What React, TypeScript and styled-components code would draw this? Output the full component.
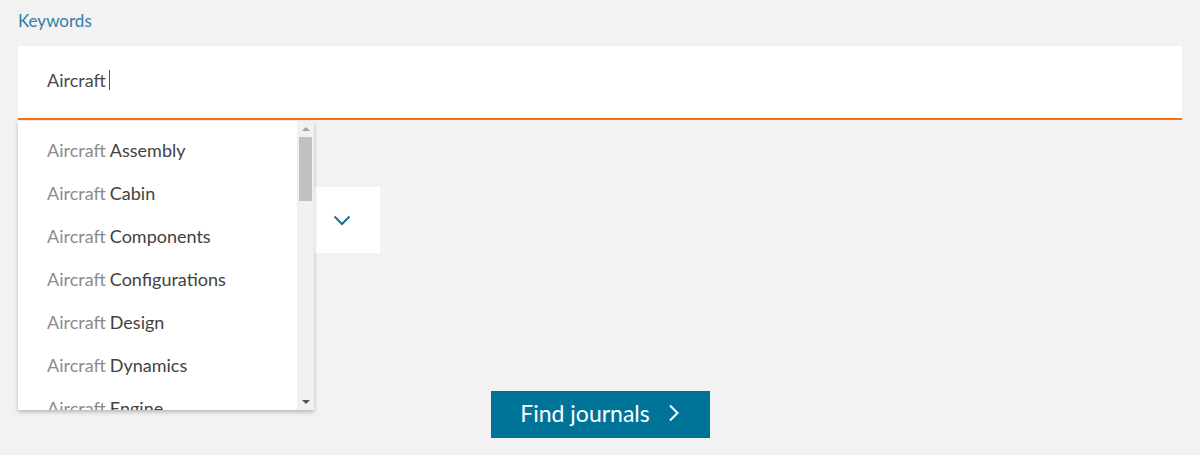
import React from "react";
import styled, { createGlobalStyle } from "styled-components";

const Global = createGlobalStyle`
  html, body { margin: 0; padding: 0; background: #f2f2f2; }
  body { font-family: Lato, "Open Sans", sans-serif; }
`;

const Page = styled.div`
  width: 1200px;
  height: 455px;
  box-sizing: border-box;
  padding: 10px 18px 0 18px;
  display: flex;
  flex-direction: column;
  overflow: hidden;
`;

const Label = styled.label`
  font-size: 17px;
  line-height: 22px;
  color: #2f7ea6;
  height: 22px;
`;

const Field = styled.div`
  position: relative;
  margin-top: 14px;
`;

const Input = styled.div`
  height: 74px;
  box-sizing: border-box;
  background: #fff;
  border-bottom: 2px solid #ff6f0f;
  display: flex;
  align-items: center;
  padding: 0 0 4px 29px;
  font-size: 18px;
  color: #4a4a4a;
`;

const Caret = styled.span`
  display: inline-block;
  width: 1px;
  height: 20px;
  background: #555;
  margin-left: 3px;
`;

const Dropdown = styled.div`
  position: absolute;
  left: 0;
  top: 75px;
  width: 296px;
  height: 289px;
  background: #fff;
  box-shadow: 0 2px 4px rgba(0, 0, 0, 0.25);
  display: flex;
  z-index: 2;
`;

const List = styled.ul`
  flex: 1;
  margin: 0;
  padding: 7px 0 0 0;
  list-style: none;
  overflow: hidden;
`;

const Item = styled.li`
  height: 43px;
  display: flex;
  align-items: center;
  padding-left: 29px;
  font-size: 18px;
  color: #424242;
  white-space: nowrap;
`;

const Prefix = styled.span`
  color: #8c8c8c;
  margin-right: 4px;
`;

const Scrollbar = styled.div`
  width: 17px;
  background: #f1f1f1;
  display: flex;
  flex-direction: column;
  align-items: center;
`;

const Arrow = styled.div<{ $down?: boolean }>`
  height: 16px;
  width: 17px;
  display: flex;
  align-items: center;
  justify-content: center;
  &::before {
    content: "";
    border-left: 4px solid transparent;
    border-right: 4px solid transparent;
    ${(p) => (p.$down ? "border-top: 4px solid #505050;" : "border-bottom: 4px solid #a3a3a3;")}
  }
`;

const Thumb = styled.div`
  width: 13px;
  height: 64px;
  background: #c1c1c1;
`;

const Track = styled.div`
  flex: 1;
`;

const SelectRow = styled.div`
  margin-top: 67px;
  display: flex;
`;

const Select = styled.div`
  width: 362px;
  height: 66px;
  background: #fff;
  display: flex;
  align-items: center;
  justify-content: flex-end;
  padding-right: 29px;
  box-sizing: border-box;
`;

const ButtonRow = styled.div`
  margin-top: 138px;
  display: flex;
  justify-content: center;
`;

const Button = styled.button`
  width: 219px;
  height: 47px;
  background: #007399;
  border: none;
  color: #fff;
  font-family: Lato, "Open Sans", sans-serif;
  font-size: 23px;
  display: flex;
  align-items: center;
  justify-content: center;
  gap: 18px;
  padding: 0 0 3px 0;
`;

const items = [
  "Assembly",
  "Cabin",
  "Components",
  "Configurations",
  "Design",
  "Dynamics",
  "Engine",
];

export default function App() {
  return (
    <Page>
      <Global />
      <Label>Keywords</Label>
      <Field>
        <Input>
          Aircraft
          <Caret />
        </Input>
        <Dropdown>
          <List>
            {items.map((s) => (
              <Item key={s}>
                <Prefix>Aircraft</Prefix>
                {s}
              </Item>
            ))}
          </List>
          <Scrollbar>
            <Arrow />
            <Thumb />
            <Track />
            <Arrow $down />
          </Scrollbar>
        </Dropdown>
      </Field>
      <SelectRow>
        <Select>
          <svg width="18" height="11" viewBox="0 0 18 11">
            <path d="M1.5 1.5 L9 9 L16.5 1.5" fill="none" stroke="#1c6f93" strokeWidth="2" />
          </svg>
        </Select>
      </SelectRow>
      <ButtonRow>
        <Button>
          Find journals
          <svg width="12" height="18" viewBox="0 0 12 18">
            <path d="M2 1.5 L9.5 9 L2 16.5" fill="none" stroke="#fff" strokeWidth="2" />
          </svg>
        </Button>
      </ButtonRow>
    </Page>
  );
}
